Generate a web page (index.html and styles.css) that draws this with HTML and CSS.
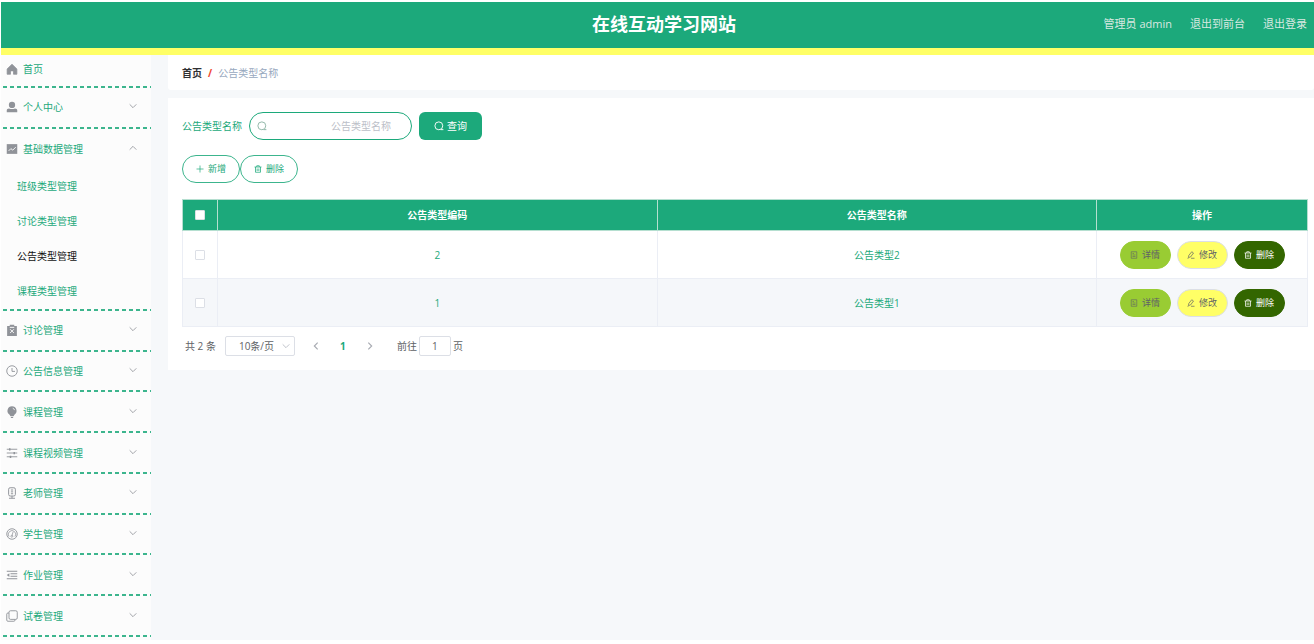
FILE: index.html
```html
<!DOCTYPE html>
<html lang="zh-CN">
<head>
<meta charset="utf-8">
<title>在线互动学习网站</title>
<link rel="stylesheet" href="styles.css">
</head>
<body>
<svg class="sprite" aria-hidden="true">
  <symbol id="down" viewBox="0 0 12 12"><path d="M2 4l4 4 4-4" fill="none" stroke="currentColor"/></symbol>
  <symbol id="up" viewBox="0 0 12 12"><path d="M2 8l4-4 4 4" fill="none" stroke="currentColor"/></symbol>
  <symbol id="left" viewBox="0 0 12 12"><path d="M8 2L4 6l4 4" fill="none" stroke="currentColor" stroke-width="1.4"/></symbol>
  <symbol id="right" viewBox="0 0 12 12"><path d="M4 2l4 4-4 4" fill="none" stroke="currentColor" stroke-width="1.4"/></symbol>
  <symbol id="search" viewBox="0 0 16 16"><circle cx="7.700" cy="7.700" r="6.300" fill="none" stroke="currentColor" stroke-width="1.500"/><path d="M10.500 13.800h4.500" stroke="currentColor" stroke-width="1.500"/></symbol>
  <symbol id="trash" viewBox="0 0 16 16"><path d="M1 4h14M5.500 4V1.500h5V4M3 4v10.500h10V4M6.300 7v5M9.700 7v5" fill="none" stroke="currentColor" stroke-width="1.5"/></symbol>
  <symbol id="plus" viewBox="0 0 16 16"><path d="M8 1v14M1 8h14" fill="none" stroke="currentColor" stroke-width="1.4"/></symbol>
  <symbol id="doc" viewBox="0 0 16 16"><path d="M2.500 1.500h11v13h-11zM5 5h3M5 8h6M5 11h6" fill="none" stroke="currentColor" stroke-width="1.2"/></symbol>
  <symbol id="edit" viewBox="0 0 16 16"><path d="M3 13l.5-4L9.500 1.500l3.500 2.500L7 12zM8 14.500h7M1 14.500h2" fill="none" stroke="currentColor" stroke-width="1.4"/></symbol>
</svg>

<header class="topbar">
  <h1 class="site-title">在线互动学习网站</h1>
  <nav class="user-nav">
    <span>管理员 admin</span>
    <a href="#">退出到前台</a>
    <a href="#">退出登录</a>
  </nav>
</header>

<div class="layout">
  <aside class="sidebar">
    <ul class="menu">
      <li class="menu-item home"><a class="menu-link" href="#">
        <svg class="menu-icon" viewBox="0 0 16 16"><path d="M8 1.500L1.500 8V15H6v-4.500h4V15h4.500V8z" fill="currentColor" stroke="currentColor" stroke-linejoin="round"/></svg>首页</a></li>
      <li class="menu-item"><button class="menu-link" type="button">
        <svg class="menu-icon" viewBox="0 0 16 16"><circle cx="8" cy="5.200" r="4.200" fill="currentColor"/><path d="M1 12q0-2 3-2 4 1.500 8 0 3 0 3 2v3H1z" fill="currentColor"/></svg>个人中心<svg class="arrow"><use href="#down"/></svg></button></li>
      <li class="menu-item group"><button class="menu-link" type="button">
        <svg class="menu-icon" viewBox="0 0 16 16"><path d="M1 1.500h14v13H1z" fill="currentColor"/><path d="M3.500 10.500l3-3 2.500 2 4-4" fill="none" stroke="#fff" stroke-width="1.200"/></svg>基础数据管理<svg class="arrow"><use href="#up"/></svg></button>
        <ul class="submenu">
          <li><a href="#">班级类型管理</a></li>
          <li><a href="#">讨论类型管理</a></li>
          <li><a class="active" href="#" aria-current="page">公告类型管理</a></li>
          <li><a href="#">课程类型管理</a></li>
        </ul></li>
      <li class="menu-item"><button class="menu-link" type="button">
        <svg class="menu-icon" viewBox="0 0 16 16"><path d="M1.500 2.500H5V1h6v1.500h3.500V16h-13z" fill="currentColor"/><path d="M5 4.500h6M5.500 7l5 5M10.500 7l-5 5" fill="none" stroke="#fff" stroke-width="1.200"/></svg>讨论管理<svg class="arrow"><use href="#down"/></svg></button></li>
      <li class="menu-item"><button class="menu-link" type="button">
        <svg class="menu-icon" viewBox="0 0 16 16"><circle cx="8" cy="8" r="7" fill="none" stroke="currentColor" stroke-width="1.200"/><path d="M8 4v4.500h4" fill="none" stroke="currentColor" stroke-width="1.200"/></svg>公告信息管理<svg class="arrow"><use href="#down"/></svg></button></li>
      <li class="menu-item"><button class="menu-link" type="button">
        <svg class="menu-icon" viewBox="0 0 16 16"><path d="M8 .5a6 6 0 0 0-3.500 10.900L6 13.500h4l1.500-2.100A6 6 0 0 0 8 .5zM6.500 14.500h3V16h-3z" fill="currentColor"/><path d="M9 3q2 .5 2.500 2.500" fill="none" stroke="#fff"/></svg>课程管理<svg class="arrow"><use href="#down"/></svg></button></li>
      <li class="menu-item"><button class="menu-link" type="button">
        <svg class="menu-icon" viewBox="0 0 16 16"><path d="M1 3h14M1 8h14M1 13h14" stroke="currentColor" stroke-width="1.200"/><path d="M4 1.500h2v3H4zM10 6.500h2v3h-2zM5 11.500h2v3H5z" fill="currentColor"/></svg>课程视频管理<svg class="arrow"><use href="#down"/></svg></button></li>
      <li class="menu-item"><button class="menu-link" type="button">
        <svg class="menu-icon" viewBox="0 0 16 16"><rect x="3.500" y="1" width="9" height="11" rx="2" fill="none" stroke="currentColor" stroke-width="1.300"/><path d="M6.500 4h3M6.500 6.500h3M6.500 9h3M8 12v3M4 15h8" stroke="currentColor" stroke-width="1.300"/></svg>老师管理<svg class="arrow"><use href="#down"/></svg></button></li>
      <li class="menu-item"><button class="menu-link" type="button">
        <svg class="menu-icon" viewBox="0 0 16 16"><circle cx="8" cy="8" r="7" fill="none" stroke="currentColor" stroke-width="1.200"/><path d="M4 11.500a5 5 0 1 1 8 0M9.500 5L8 10" fill="none" stroke="currentColor"/><circle cx="7.800" cy="11" r="1.300" fill="none" stroke="currentColor"/></svg>学生管理<svg class="arrow"><use href="#down"/></svg></button></li>
      <li class="menu-item"><button class="menu-link" type="button">
        <svg class="menu-icon" viewBox="0 0 16 16"><path d="M1 3h14M6 6.300h9M6 9.700h9M1 13h14" stroke="currentColor" stroke-width="1.400"/><path d="M1 8l3.500-2.500v5z" fill="currentColor"/></svg>作业管理<svg class="arrow"><use href="#down"/></svg></button></li>
      <li class="menu-item"><button class="menu-link" type="button">
        <svg class="menu-icon" viewBox="0 0 16 16"><rect x="4" y="1" width="11" height="11.500" rx="2" fill="none" stroke="currentColor" stroke-width="1.200"/><path d="M4 4H2.500Q1 4 1 5.500v8Q1 15 2.500 15h8q1.500 0 1.500-1.500v-1" fill="none" stroke="currentColor" stroke-width="1.200"/></svg>试卷管理<svg class="arrow"><use href="#down"/></svg></button></li>
    </ul>
  </aside>

  <main class="main">
    <nav class="breadcrumb" aria-label="面包屑">
      <a href="#">首页</a><span class="slash">/</span><span class="current">公告类型名称</span>
    </nav>

    <section class="panel">
      <form class="search-form">
        <label for="type-name">公告类型名称</label>
        <div class="search-box">
          <svg class="search-icon"><use href="#search"/></svg>
          <input id="type-name" type="text" placeholder="公告类型名称">
        </div>
        <button class="query" type="button"><svg><use href="#search"/></svg>查询</button>
      </form>

      <div class="toolbar">
        <button class="pill outline" type="button"><svg><use href="#plus"/></svg>新增</button>
        <button class="pill outline" type="button"><svg><use href="#trash"/></svg>删除</button>
      </div>

      <table class="data">
        <colgroup><col class="col-check"><col><col><col class="col-ops"></colgroup>
        <thead>
          <tr>
            <th><input class="check" type="checkbox" aria-label="全选"></th>
            <th>公告类型编码</th><th>公告类型名称</th><th>操作</th>
          </tr>
        </thead>
        <tbody>
          <tr>
            <td><input class="check" type="checkbox" aria-label="选择 2"></td>
            <td>2</td><td>公告类型2</td>
            <td><div class="ops">
              <button class="pill detail" type="button"><svg><use href="#doc"/></svg>详情</button>
              <button class="pill modify" type="button"><svg><use href="#edit"/></svg>修改</button>
              <button class="pill remove" type="button"><svg><use href="#trash"/></svg>删除</button>
            </div></td>
          </tr>
          <tr>
            <td><input class="check" type="checkbox" aria-label="选择 1"></td>
            <td>1</td><td>公告类型1</td>
            <td><div class="ops">
              <button class="pill detail" type="button"><svg><use href="#doc"/></svg>详情</button>
              <button class="pill modify" type="button"><svg><use href="#edit"/></svg>修改</button>
              <button class="pill remove" type="button"><svg><use href="#trash"/></svg>删除</button>
            </div></td>
          </tr>
        </tbody>
      </table>

      <div class="pagination">
        <span>共 2 条</span>
        <div class="page-size">
          <select aria-label="每页条数"><option>10条/页</option></select>
          <svg class="select-arrow"><use href="#down"/></svg>
        </div>
        <div class="pager">
          <button type="button" aria-label="上一页" disabled><svg><use href="#left"/></svg></button>
          <button class="page-current" type="button">1</button>
          <button type="button" aria-label="下一页" disabled><svg><use href="#right"/></svg></button>
        </div>
        <div class="jump">
          <label for="page-no">前往</label>
          <input id="page-no" type="text" value="1">
          <span>页</span>
        </div>
      </div>
    </section>
  </main>
</div>
</body>
</html>
```

FILE: styles.css
```css
:root {
  --green: #1ca97b;
  --gray: #909399;
  --line: #ebeef5;
}

* {
  box-sizing: border-box;
}

body {
  margin: 0;
  padding: 2px 0 4px 1px;
  min-height: 100vh;
  display: flex;
  flex-direction: column;
  background: #fff;
  color: var(--green);
  font: 10px/16px "Open Sans", "Noto Sans CJK SC", sans-serif;
}

button,
input,
select {
  font: inherit;
  color: inherit;
}

button {
  margin: 0;
  padding: 0;
  border: 0;
  background: none;
  cursor: pointer;
}

a {
  color: inherit;
  text-decoration: none;
}

ul {
  margin: 0;
  padding: 0;
  list-style: none;
}

.sprite {
  display: none;
}

/* Top bar */
.topbar {
  display: grid;
  grid-template-columns: 1fr auto 1fr;
  align-items: center;
  height: 53px;
  padding: 0 7px 2px 0;
  background: var(--green);
  border-bottom: 7px solid #ff6;
}

.site-title {
  grid-column: 2;
  margin: 0 0 0 20px;
  color: #fff;
  font-size: 18px;
  line-height: 24px;
}

.user-nav {
  display: flex;
  justify-content: flex-end;
  gap: 18px;
  color: #d9e8e1;
  font-size: 11px;
}

/* Sidebar */
.layout {
  flex: 1;
  display: flex;
  background: #f6f8fa;
}

.sidebar {
  flex: 0 0 150px;
  display: flex;
  padding: 0 0 3px 2px;
  background: #fcfcfc;
}

.menu {
  flex: 1;
  display: flex;
  flex-direction: column;
}

.menu-item {
  flex: 1 0 40px;
  display: flex;
  flex-direction: column;
  padding-bottom: 2px;
  background: repeating-linear-gradient(90deg, #3cb58d 0 4px, transparent 4px 7px) bottom / 100% 2px no-repeat;
}

.menu-item.home {
  flex: 0 0 33px;
  padding-bottom: 6px;
}

.menu-item.group {
  flex: 0 0 auto;
}

.menu-link {
  flex: 1 0 auto;
  display: flex;
  align-items: center;
  gap: 5px;
  padding: 0 13px 0 3px;
}

.group .menu-link {
  height: 40px;
}

.menu-icon {
  width: 12px;
  height: 12px;
  color: var(--gray);
}

.arrow {
  width: 10px;
  height: 10px;
  margin-left: auto;
  margin-bottom: 2px;
  color: var(--gray);
}

.submenu a {
  display: block;
  padding-left: 14px;
  line-height: 35px;
}

.submenu .active {
  color: #111;
}

/* Content */
.main {
  flex: 1;
  min-width: 0;
  padding-left: 17px;
}

.breadcrumb {
  display: flex;
  align-items: center;
  gap: 6px;
  height: 35px;
  margin-bottom: 8px;
  padding-left: 14px;
  background: #fff;
  border-radius: 0 0 3px 3px;
  color: #303133;
  font-weight: 700;
}

.slash {
  color: #f0442c;
}

.current {
  color: #97a8be;
  font-weight: 400;
}

.panel {
  padding: 14px 6px 14px 14px;
  background: #fff;
}

.search-form {
  display: flex;
  align-items: center;
  gap: 7px;
  margin-bottom: 15px;
}

.search-box {
  position: relative;
  width: 163px;
}

.search-box input {
  display: block;
  width: 100%;
  height: 28px;
  padding: 0 20px 0 26px;
  border: 1px solid var(--green);
  border-radius: 14px;
  background: #fff;
  text-align: right;
}

.search-box input::placeholder {
  color: #bcc0c8;
}

.search-icon {
  position: absolute;
  left: 8px;
  top: 9px;
  width: 10px;
  height: 10px;
  color: #8fb5a6;
}

.query {
  display: flex;
  align-items: center;
  justify-content: center;
  gap: 3px;
  width: 63px;
  height: 28px;
  border-radius: 6px;
  background: var(--green);
  color: #fff;
}

.query svg {
  width: 10px;
  height: 10px;
}

.toolbar {
  display: flex;
  margin-bottom: 16px;
}

.pill {
  display: flex;
  align-items: center;
  justify-content: center;
  gap: 4px;
  width: 51px;
  height: 28px;
  border: 1px solid #dcdfe6;
  border-radius: 14px;
  font-size: 9px;
}

.pill svg {
  width: 8px;
  height: 8px;
}

.outline {
  width: 58px;
  border-color: #3cb58d;
}

.detail {
  background: #9c3;
  border-color: #9c3;
  color: #606266;
}

.modify {
  background: #ff6;
  color: #606266;
}

.remove {
  background: #360;
  border-color: #360;
  color: #fff;
}

/* Table */
.data {
  width: 100%;
  table-layout: fixed;
  border-collapse: collapse;
  border: 1px solid var(--line);
}

.col-check {
  width: 35px;
}

.col-ops {
  width: 211px;
}

.data th,
.data td {
  padding: 0;
  border: 1px solid var(--line);
  text-align: center;
}

.data th {
  height: 31px;
  border-color: #b5dfd0;
  background: var(--green);
  color: #fff;
}

.data td {
  height: 48px;
}

.data tbody tr:nth-child(even) {
  background: #f5f7fa;
}

.check {
  appearance: none;
  display: block;
  width: 10px;
  height: 10px;
  margin: 0 auto;
  border: 1px solid #dcdfe6;
  border-radius: 1px;
  background: #fff;
}

.ops {
  display: flex;
  justify-content: center;
  gap: 6px;
}

/* Pagination */
.pagination {
  display: flex;
  align-items: center;
  margin-top: 9px;
  padding-left: 3px;
  color: #606266;
}

.page-size {
  position: relative;
  margin: 0 16px 0 9px;
}

.page-size select {
  appearance: none;
  display: block;
  width: 70px;
  height: 20px;
  padding: 0 0 0 13px;
  border: 1px solid #dcdfe6;
  border-radius: 2px;
  background: #fff;
}

.select-arrow {
  position: absolute;
  right: 4px;
  top: 5px;
  width: 10px;
  height: 10px;
  color: #b4b8c0;
  pointer-events: none;
}

.pager {
  display: flex;
  gap: 17px;
}

.pager button {
  display: flex;
  align-items: center;
  justify-content: center;
  width: 10px;
  height: 20px;
  color: #a8abb2;
}

.pager svg {
  width: 10px;
  height: 10px;
}

.pager .page-current {
  color: var(--green);
  font-weight: 700;
}

.jump {
  display: flex;
  align-items: center;
  gap: 2px;
  margin-left: 22px;
}

.jump input {
  width: 32px;
  height: 20px;
  padding: 0;
  border: 1px solid #dcdfe6;
  border-radius: 2px;
  text-align: center;
}
```
